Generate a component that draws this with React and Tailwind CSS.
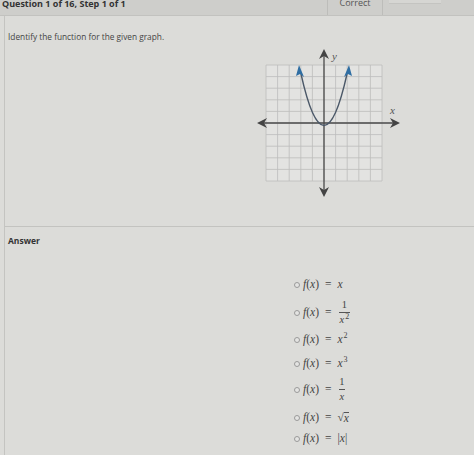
import React from "react";

const Graph = () => {
  const cell = 11.6;
  const ox = 68;
  const oy = 75;
  const lines = [];
  for (let i = -5; i <= 5; i++) {
    lines.push(
      <line key={"v" + i} x1={ox + i * cell} y1={oy - 5 * cell} x2={ox + i * cell} y2={oy + 5 * cell} stroke="#bdbdbb" strokeWidth="0.8" />
    );
    lines.push(
      <line key={"h" + i} x1={ox - 5 * cell} y1={oy + i * cell} x2={ox + 5 * cell} y2={oy + i * cell} stroke="#bdbdbb" strokeWidth="0.8" />
    );
  }
  return (
    <svg width="145" height="150" viewBox="0 0 145 150">
      <rect x={ox - 5 * cell} y={oy - 5 * cell} width={10 * cell} height={10 * cell} fill="#e3e3e1" />
      {lines}
      {/* axes */}
      <line x1="4" y1={oy} x2="141" y2={oy} stroke="#4a4a4a" strokeWidth="1.3" />
      <line x1={ox} y1="4" x2={ox} y2="146" stroke="#4a4a4a" strokeWidth="1.3" />
      <path d="M1 75 L11 70 L8 75 L11 80 Z" fill="#444" />
      <path d="M144 75 L134 70 L137 75 L134 80 Z" fill="#444" />
      <path d="M68 1 L63 11 L68 8 L73 11 Z" fill="#444" />
      <path d="M68 149 L63 139 L68 142 L73 139 Z" fill="#444" />
      <text x="76" y="12" fontFamily="'Liberation Serif', serif" fontStyle="italic" fontSize="11" fill="#555">y</text>
      <text x="134" y="66" fontFamily="'Liberation Serif', serif" fontStyle="italic" fontSize="11" fill="#555">x</text>
      {/* parabola */}
      <path d="M45 26 Q68 128.9 91 26" fill="none" stroke="#4b5868" strokeWidth="1.4" />
      <path d="M43 17 L40 28 L44 26 L48 29 Z" fill="#2f6ea3" />
      <path d="M93 17 L88 29 L92 26 L96 28 Z" fill="#2f6ea3" />
    </svg>
  );
};

const Frac = ({ num, den }) => (
  <span className="inline-flex flex-col items-center leading-none mx-[1px]">
    <span className="text-[10.5px] pb-[2px]">{num}</span>
    <span className="border-t border-[#555] px-[1px] pt-[2px] text-[10.5px]">{den}</span>
  </span>
);

const Sup = ({ n }) => <sup className="text-[8px] -top-[4px] ml-[1px]">{n}</sup>;

const options = [
  { mt: "mt-0", h: "h-[16px]", rhs: <i>x</i> },
  { mt: "mt-[6px]", h: "h-[28px]", rhs: <Frac num="1" den={<><i>x</i><Sup n="2" /></>} /> },
  { mt: "mt-[5px]", h: "h-[16px]", rhs: <><i>x</i><Sup n="2" /></> },
  { mt: "mt-[8px]", h: "h-[16px]", rhs: <><i>x</i><Sup n="3" /></> },
  { mt: "mt-[4px]", h: "h-[28px]", rhs: <Frac num="1" den={<i>x</i>} /> },
  { mt: "mt-[6px]", h: "h-[16px]", rhs: <><span>√</span><span className="border-t border-[#555] leading-[11px]"><i>x</i></span></> },
  { mt: "mt-[5px]", h: "h-[16px]", rhs: <>|<i>x</i>|</> },
];

export default function App() {
  return (
    <div className="w-[474px] h-[455px] overflow-hidden flex flex-col bg-[#dcdcd9] text-[#3a3a3a]" style={{ fontFamily: "'Open Sans', 'Liberation Sans', sans-serif" }}>
      <div className="h-[16px] shrink-0 flex bg-[#cececb] border-b border-[#c2c2bf]">
        <div className="w-[327px] pl-[2px] -mt-[2px] leading-[11px] text-[9px] font-bold text-[#333]">Question 1 of 16, Step 1 of 1</div>
        <div className="w-[56px] border-l border-r border-[#bdbdba] text-center leading-[9px] text-[9px] text-[#555] overflow-hidden -mt-[2px]">
          Correct
        </div>
        <div className="flex-1 px-[4px]">
          <div className="w-[52px] ml-[2px] h-[4px] bg-[#d6d6d3] border-b border-[#c4c4c1]" />
        </div>
      </div>
      <div className="flex-1 border-l border-[#c4c4c1] ml-[4px]">
        <div className="h-[211px] border-b border-[#c3c3c0]">
          <div className="pt-[15px] pl-[3px] text-[8.3px] text-[#444]">Identify the function for the given graph.</div>
          <div className="ml-[251px] mt-[5px]">
            <Graph />
          </div>
        </div>
        <div className="pt-[8px] pl-[3px]">
          <div className="text-[8.5px] font-bold text-[#333]">Answer</div>
          <div className="mt-[29px] ml-[286px] flex flex-col" style={{ fontFamily: "'Liberation Serif', serif" }}>
            {options.map((o, i) => (
              <div key={i} className={"flex items-center text-[11.5px] text-[#444] " + o.h + " " + o.mt}>
                <span className="w-[6px] h-[6px] rounded-full border border-[#9a9a9a] bg-[#e4e4e2] mr-[3px]" />
                <span><i>f</i>(<i>x</i>)</span>
                <span className="mx-[6px]">=</span>
                <span className="flex items-center">{o.rhs}</span>
              </div>
            ))}
          </div>
        </div>
      </div>
    </div>
  );
}
